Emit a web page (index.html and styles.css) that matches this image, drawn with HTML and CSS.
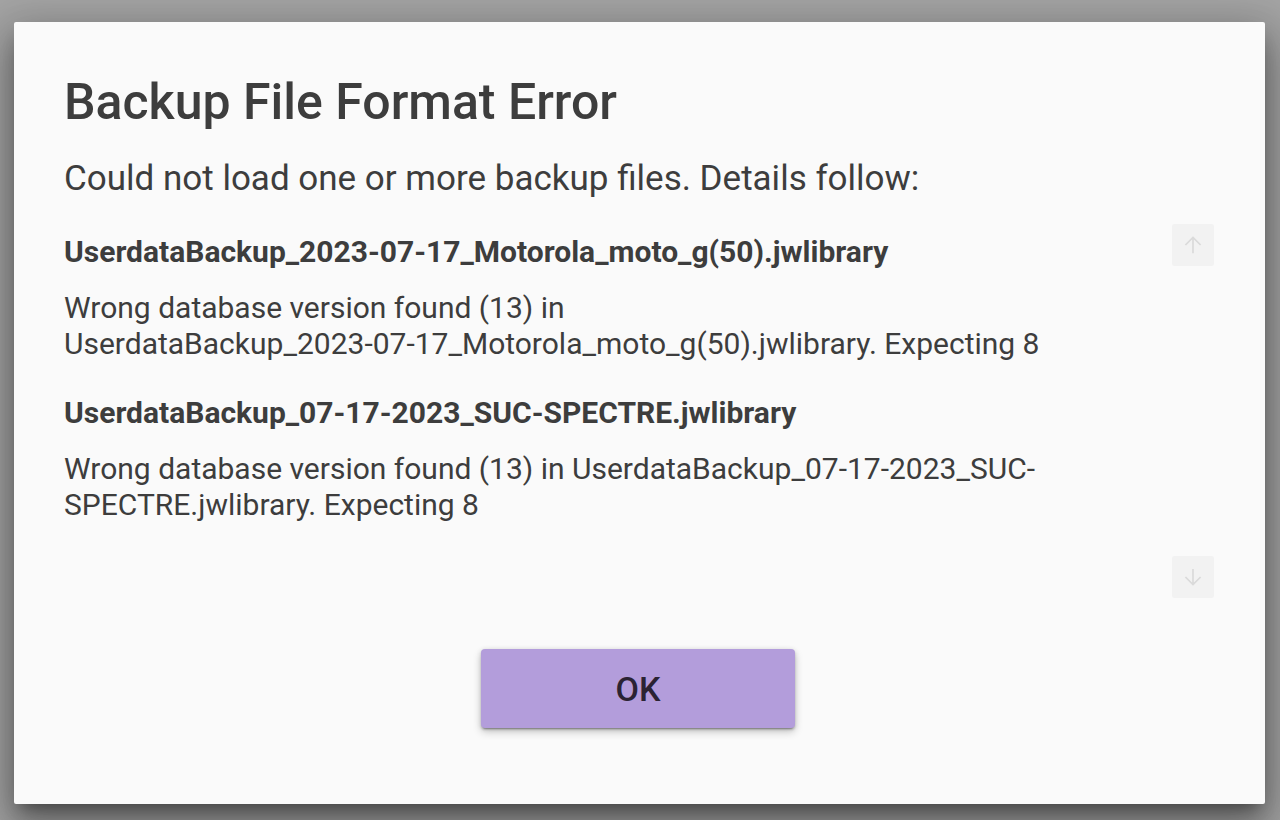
FILE: index.html
```html
<!DOCTYPE html>
<html lang="en">
<head>
<meta charset="utf-8">
<title>Backup File Format Error</title>
<link rel="stylesheet" href="styles.css">
</head>
<body>
<div class="dialog">
  <h1 class="title">Backup File Format Error</h1>
  <p class="subtitle">Could not load one or more backup files. Details follow:</p>
  <div class="scroll-area">
    <div class="details">
      <div class="file">UserdataBackup_2023-07-17_Motorola_moto_g(50).jwlibrary</div>
      <div class="message">Wrong database version found (13) in <span class="nowrap">UserdataBackup_2023-07-17_Motorola_moto_g(50).jwlibrary.</span> Expecting 8</div>
      <div class="file second">UserdataBackup_07-17-2023_SUC-SPECTRE.jwlibrary</div>
      <div class="message">Wrong database version found (13) in UserdataBackup_07-17-2023_SUC-SPECTRE.jwlibrary. Expecting 8</div>
    </div>
    <div class="scroll-buttons">
      <div class="scroll-btn">
        <svg viewBox="0 0 24 24" width="26" height="26"><path d="M12 19.5V5M5 12l7-7 7 7" fill="none" stroke="#dadada" stroke-width="1.6"/></svg>
      </div>
      <div class="scroll-btn">
        <svg viewBox="0 0 24 24" width="26" height="26"><path d="M12 4.5V19M5 12l7 7 7-7" fill="none" stroke="#dadada" stroke-width="1.6"/></svg>
      </div>
    </div>
  </div>
  <div class="actions">
    <button class="ok-btn">OK</button>
  </div>
</div>
</body>
</html>
```

FILE: styles.css
```css
html, body {
  margin: 0;
  height: 100%;
}
body {
  background: #a4a4a4;
  padding: 22px 15px 0 14px;
  box-sizing: border-box;
  overflow: hidden;
  font-family: Roboto, "Noto Sans", sans-serif;
  color: #3d3d3d;
}
.dialog {
  background: #fafafa;
  height: 782px;
  border-radius: 2px;
  box-sizing: border-box;
  padding: 51px 51px 0 50px;
  display: flex;
  flex-direction: column;
  box-shadow: 0 11px 15px -7px rgba(0,0,0,0.35), 0 24px 38px 3px rgba(0,0,0,0.25), 0 9px 46px 8px rgba(0,0,0,0.2);
}
.title {
  margin: 0;
  font-size: 50px;
  line-height: 58px;
  font-weight: 500;
  color: #3d3d3d;
}
.subtitle {
  margin: 28px 0 0;
  font-size: 35px;
  line-height: 40px;
  font-weight: 400;
}
.scroll-area {
  margin-top: 25px;
  height: 374px;
  display: grid;
  grid-template-columns: 1fr 42px;
  column-gap: 8px;
}
.details {
  padding-top: 10px;
}
.file {
  font-size: 30px;
  line-height: 36px;
  font-weight: 700;
}
.file.second {
  margin-top: 33px;
}
.message {
  margin-top: 20px;
  font-size: 30px;
  line-height: 36px;
}
.nowrap {
  white-space: nowrap;
}
.scroll-buttons {
  display: flex;
  flex-direction: column;
  justify-content: space-between;
}
.scroll-btn {
  width: 42px;
  height: 42px;
  background: #f2f2f2;
  border-radius: 2px;
  display: flex;
  align-items: center;
  justify-content: center;
}
.actions {
  margin-top: 51px;
  display: flex;
  justify-content: center;
  padding-right: 2px;
}
.ok-btn {
  width: 314px;
  height: 79px;
  border: none;
  border-radius: 4px;
  background: #b39ddb;
  color: #2b2333;
  font-family: Roboto, sans-serif;
  font-size: 34px;
  font-weight: 500;
  box-shadow: 0 3px 1px -2px rgba(0,0,0,0.2), 0 2px 2px 0 rgba(0,0,0,0.14), 0 1px 5px 0 rgba(0,0,0,0.12), 0 4px 8px rgba(0,0,0,0.2);
}
```
